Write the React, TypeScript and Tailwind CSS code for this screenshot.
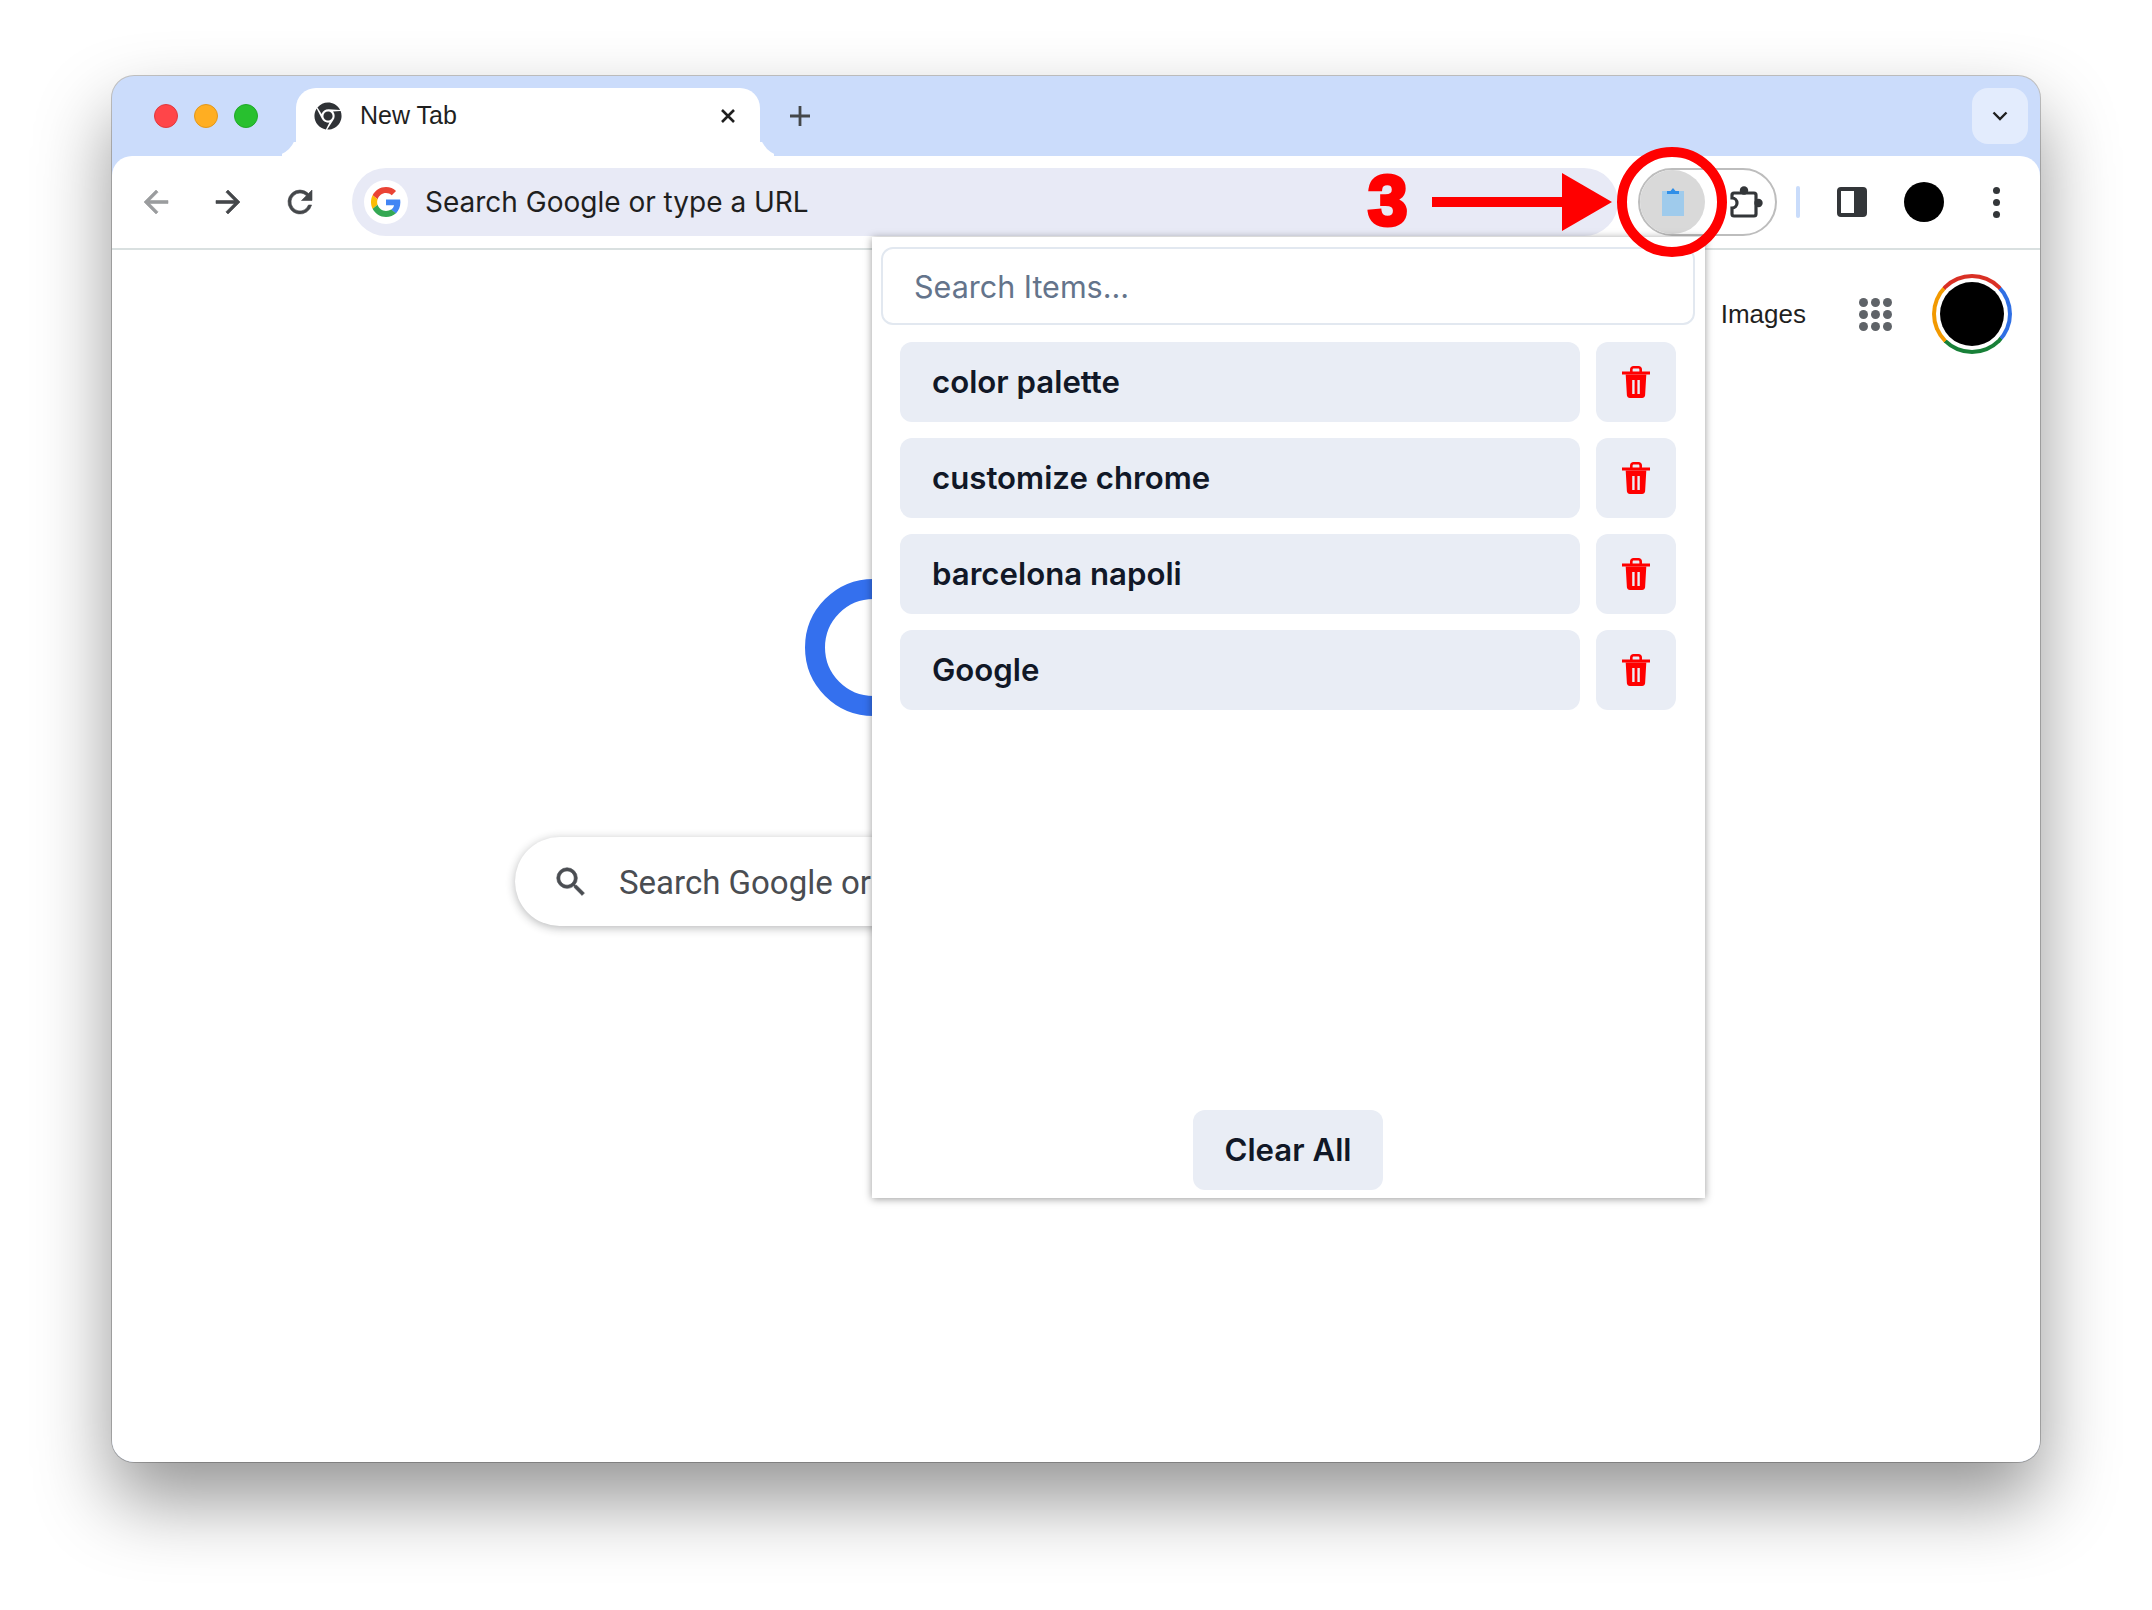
import { FaChrome } from 'react-icons/fa'

const items = ['color palette', 'customize chrome', 'barcelona napoli', 'Google']

function GoogleG() {
  return (
    <svg viewBox="0 0 48 48" className="w-[30px] h-[30px]">
      <path fill="#EA4335" d="M24 9.5c3.54 0 6.71 1.22 9.21 3.6l6.85-6.85C35.9 2.38 30.47 0 24 0 14.62 0 6.51 5.38 2.56 13.22l7.98 6.19C12.43 13.72 17.74 9.5 24 9.5z" />
      <path fill="#4285F4" d="M46.98 24.55c0-1.57-.15-3.09-.38-4.55H24v9.02h12.94c-.58 2.96-2.26 5.48-4.78 7.18l7.73 6c4.51-4.18 7.09-10.36 7.09-17.65z" />
      <path fill="#FBBC05" d="M10.53 28.59c-.48-1.45-.76-2.99-.76-4.59s.27-3.14.76-4.59l-7.98-6.19C.92 16.46 0 20.12 0 24c0 3.88.92 7.54 2.56 10.78l7.97-6.19z" />
      <path fill="#34A853" d="M24 48c6.48 0 11.93-2.13 15.89-5.81l-7.73-6c-2.15 1.45-4.92 2.3-8.16 2.3-6.26 0-11.57-4.22-13.47-9.91l-7.98 6.19C6.51 42.62 14.62 48 24 48z" />
    </svg>
  )
}

function TrashIcon() {
  return (
    <svg viewBox="0 0 28 32" className="w-[28px] h-[32px]" fill="#ff0000">
      <path d="M8 6V3.500C8 1.500 9.500 0 11.500 0h5C18.500 0 20 1.500 20 3.500V6h-2.600V3.800c0-.7-.5-1.200-1.200-1.200h-4.400c-.7 0-1.200.5-1.200 1.200V6H8z" />
      <rect x="0" y="5.500" width="28" height="3" />
      <path fillRule="evenodd" d="M3.700 8.500h20.600l-1.200 20.700c-.1 1.600-1.400 2.800-3 2.800H7.900c-1.600 0-2.900-1.200-3-2.800L3.700 8.500zM10.200 14v14h2.400V14h-2.400zm5.200 0v14h2.400V14h-2.400z" />
    </svg>
  )
}

function PuzzleIcon() {
  return (
    <svg viewBox="0 0 34 32" className="w-[34px] h-[32px] text-[#333639]">
      <path
        d="M5 7H25a2 2 0 0 1 2 2V28a2 2 0 0 1-2 2H5a2 2 0 0 1-2-2V22c3 0 5-2.500 5-5s-2-5-5-5V9a2 2 0 0 1 2-2z"
        fill="none"
        stroke="currentColor"
        strokeWidth="3.200"
      />
      <circle cx="15" cy="4.500" r="4.200" fill="currentColor" />
      <circle cx="29.500" cy="17" r="4.200" fill="currentColor" />
    </svg>
  )
}

function ToolIcon({ d, className }: { d: string; className: string }) {
  return (
    <svg viewBox="0 0 24 24" className={className} fill="currentColor" stroke="currentColor" strokeWidth="0.400">
      <path d={d} />
    </svg>
  )
}

export default function App() {
  return (
    <div className="min-h-[1610px] bg-white pl-[112px] pr-[112px] pt-[76px] font-['Inter',sans-serif]">
      <div className="relative w-[1928px] h-[1386px] rounded-[22px] overflow-hidden bg-[#cbdcfb] flex flex-col shadow-[0_0_0_1px_rgba(0,0,0,0.22),0_38px_76px_rgba(0,0,0,0.42)]">
        {/* Tab strip */}
        <div className="h-[80px] shrink-0 flex items-end">
          <div className="flex items-center gap-4 pl-[42px] pr-[38px] pb-[28px]">
            <span className="w-6 h-6 rounded-full bg-[#ff4549] border border-[#e0393d]" />
            <span className="w-6 h-6 rounded-full bg-[#ffae22] border border-[#e2971a]" />
            <span className="w-6 h-6 rounded-full bg-[#28c02f] border border-[#21a828]" />
          </div>
          <div className="relative w-[464px] h-[68px] bg-white rounded-t-[20px] flex items-center pl-[18px] pr-[24px] pb-[12px] text-[#1f1f1f]">
            <span className="absolute -left-6 bottom-0 w-6 h-6 rounded-br-[24px] shadow-[10px_10px_0_0_#fff]" />
            <span className="absolute -right-6 bottom-0 w-6 h-6 rounded-bl-[24px] shadow-[-10px_10px_0_0_#fff]" />
            <FaChrome className="w-[28px] h-[28px] text-[#2f3236]" />
            <span className="ml-[18px] text-[25px] font-['Liberation_Sans',sans-serif]">New Tab</span>
            <svg viewBox="0 0 16 16" className="ml-auto w-4 h-4" stroke="#1f1f1f" strokeWidth="2.600">
              <path d="M2 2l12 12M14 2L2 14" />
            </svg>
          </div>
          <svg viewBox="0 0 20 20" className="ml-[30px] mb-[30px] w-5 h-5" stroke="#44474a" strokeWidth="2.800">
            <path d="M10 0v20M0 10h20" />
          </svg>
          <div className="ml-auto mr-3 mb-[12px] w-14 h-14 rounded-[16px] bg-[#e3ecfd] flex items-center justify-center">
            <svg viewBox="0 0 16 10" className="w-4 h-[10px]" fill="none" stroke="#1f1f1f" strokeWidth="2.400">
              <path d="M1.500 1.500L8 8l6.500-6.500" />
            </svg>
          </div>
        </div>

        {/* Toolbar */}
        <div className="h-[94px] shrink-0 bg-white rounded-t-[20px] border-b-2 border-[#d9e0e0] flex items-center relative">
          <div className="flex items-center gap-[36px] pl-[26px] text-[#44474a]">
            <ToolIcon className="w-9 h-9 text-[#9a9c9e]" d="M20 11H7.830l5.590-5.590L12 4l-8 8 8 8 1.410-1.410L7.830 13H20v-2z" />
            <ToolIcon className="w-9 h-9" d="M12 4l-1.410 1.410L16.170 11H4v2h12.170l-5.580 5.590L12 20l8-8z" />
            <ToolIcon className="w-9 h-9" d="M17.650 6.350A7.960 7.960 0 0 0 12 4a8 8 0 1 0 7.730 10h-2.080A6 6 0 1 1 12 6c1.660 0 3.140.69 4.220 1.780L13 11h7V4l-2.350 2.350z" />
          </div>
          <div className="ml-[34px] w-[1266px] h-[68px] rounded-full bg-[#e8eaf6] flex items-center pl-[12px] text-[#1f1f1f] text-[28px]">
            <span className="w-[44px] h-[44px] rounded-full bg-white flex items-center justify-center">
              <GoogleG />
            </span>
            <span className="ml-[17px]">Search Google or type a URL</span>
          </div>
          <div className="ml-[20px] w-[139px] h-[68px] rounded-full border-2 border-[#bdbdbd] flex items-center">
            <div className="w-[65px] h-[64px] rounded-full bg-[#d9d9d9] flex items-center justify-center">
              <svg viewBox="0 0 22 28" className="w-[22px] h-[28px]">
                <rect x="0" y="3" width="22" height="25" fill="#9fcbec" />
                <path d="M5 6V3h3.500L11 0l2.500 3H17v3z" fill="#2f8fe8" />
              </svg>
            </div>
            <span className="ml-[24px]">
              <PuzzleIcon />
            </span>
          </div>
          <span className="ml-[19px] w-1 h-8 rounded-full bg-[#c9dcfb]" />
          <div className="ml-[37px] w-[30px] h-[30px] rounded-[4px] border-[4px] border-[#333639] flex justify-end">
            <span className="w-[9px] bg-[#333639]" />
          </div>
          <span className="ml-[37px] w-10 h-10 rounded-full bg-black" />
          <div className="ml-[49px] flex flex-col gap-[5px]">
            <span className="w-[7px] h-[7px] rounded-full bg-[#333639]" />
            <span className="w-[7px] h-[7px] rounded-full bg-[#333639]" />
            <span className="w-[7px] h-[7px] rounded-full bg-[#333639]" />
          </div>
        </div>

        {/* Page */}
        <div className="relative flex-1 bg-white flex flex-col items-center">
          <div className="absolute top-[24px] right-[28px] flex items-center">
            <span className="text-[26px] text-[#1f1f1f] font-['Liberation_Sans',sans-serif]">Images</span>
            <div className="ml-[53px] grid grid-cols-3 gap-[3px]">
              {Array.from({ length: 9 }).map((_, i) => (
                <span key={i} className="w-[9px] h-[9px] rounded-full bg-[#5f6368]" />
              ))}
            </div>
            <div className="ml-[40px] w-20 h-20 rounded-full p-1 bg-[conic-gradient(from_-48deg,#d93025_0_96deg,#2f6fe4_96deg_178deg,#188038_178deg_272deg,#f29900_272deg_360deg)]">
              <div className="w-full h-full rounded-full bg-white p-1">
                <div className="w-full h-full rounded-full bg-black" />
              </div>
            </div>
          </div>

          <div className="mt-[329px] w-[544px] pl-[1px]">
            <div className="w-[137px] h-[137px] rounded-full border-[20px] border-[#3470ee]" />
          </div>
          <div className="mt-[121px] w-[1122px] h-[89px] rounded-full bg-white shadow-[0_2px_10px_rgba(32,33,36,0.32)] flex items-center pl-[37px] text-[#4a4d52]">
            <ToolIcon className="w-[38px] h-[38px]" d="M15.500 14h-.790l-.280-.270A6.470 6.470 0 0 0 16 9.500 6.500 6.500 0 1 0 9.500 16c1.610 0 3.090-.590 4.230-1.570l.270.280v.790l5 4.990L20.490 19l-4.990-5zm-6 0C7.010 14 5 11.990 5 9.500S7.010 5 9.500 5 14 7.010 14 9.500 11.990 14 9.500 14z" />
            <span className="ml-[29px] pt-[2px] text-[33px] font-['Roboto',sans-serif]">Search Google or type a URL</span>
          </div>
        </div>

        {/* Extension popup */}
        <div className="absolute left-[760px] top-[161px] w-[833px] h-[961px] bg-white shadow-[0_1px_8px_rgba(0,0,0,0.4)] flex flex-col pl-[9px] pr-[10px] pt-[10px] pb-[8px]">
          <input
            readOnly
            placeholder="Search Items..."
            className="w-full h-[78px] shrink-0 rounded-[12px] border-2 border-[#e2e8f0] px-[31px] text-[30.5px] outline-none placeholder:text-[#64748b]"
          />
          <div className="mt-[17px] px-[19px] flex flex-col gap-4">
            {items.map(item => (
              <div key={item} className="flex gap-4">
                <div className="flex-1 h-20 rounded-[12px] bg-[#e9edf5] flex items-center pl-[32px] pt-[1px] text-[31.2px] font-semibold text-[#111827]">
                  {item}
                </div>
                <div className="w-20 h-20 rounded-[12px] bg-[#e9edf5] flex items-center justify-center">
                  <TrashIcon />
                </div>
              </div>
            ))}
          </div>
          <button className="mt-auto mx-auto w-[190px] h-20 rounded-[12px] bg-[#e9edf5] pt-[1px] text-[31.2px] font-semibold text-[#111827]">
            Clear All
          </button>
        </div>

        {/* Red annotations */}
        <span className="absolute left-[1256px] top-[81px] text-[71px] leading-[88px] font-bold text-[#ff0000] font-['Liberation_Sans',sans-serif] [-webkit-text-stroke:4px_#ff0000]">
          3
        </span>
        <svg viewBox="0 0 180 58" className="absolute left-[1320px] top-[97px] w-[180px] h-[58px]" fill="#ff0000">
          <path d="M0 24h130V0l50 29-50 29V34H0z" />
        </svg>
        <span className="absolute left-[1505px] top-[71px] w-[110px] h-[110px] rounded-full border-[10px] border-[#ff0000]" />
      </div>
    </div>
  )
}
